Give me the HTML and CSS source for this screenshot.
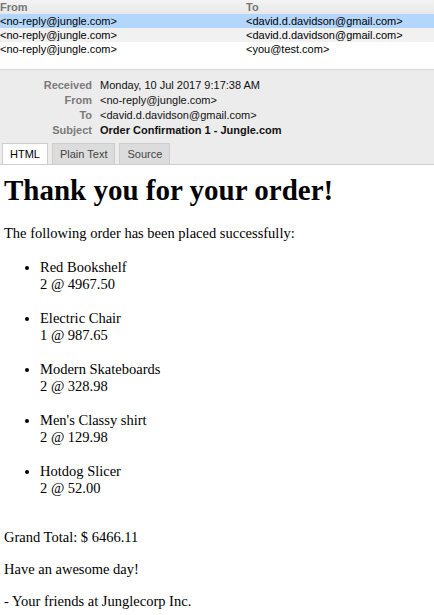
FILE: index.html
```html
<!DOCTYPE html>
<html>
<head>
<meta charset="utf-8">
<link rel="stylesheet" href="styles.css">
</head>
<body>
<div class="list">
  <div class="row head"><span class="c1">From</span><span class="c2">To</span></div>
  <div class="row sel"><span class="c1">&lt;no-reply@jungle.com&gt;</span><span class="c2">&lt;david.d.davidson@gmail.com&gt;</span></div>
  <div class="row alt"><span class="c1">&lt;no-reply@jungle.com&gt;</span><span class="c2">&lt;david.d.davidson@gmail.com&gt;</span></div>
  <div class="row"><span class="c1">&lt;no-reply@jungle.com&gt;</span><span class="c2">&lt;you@test.com&gt;</span></div>
</div>
<div class="meta">
  <div class="fields">
    <span class="lbl">Received</span><span class="val">Monday, 10 Jul 2017 9:17:38 AM</span>
    <span class="lbl">From</span><span class="val">&lt;no-reply@jungle.com&gt;</span>
    <span class="lbl">To</span><span class="val">&lt;david.d.davidson@gmail.com&gt;</span>
    <span class="lbl">Subject</span><span class="val subj">Order Confirmation 1 - Jungle.com</span>
  </div>
  <div class="tabs">
    <span class="tab active">HTML</span>
    <span class="tab">Plain Text</span>
    <span class="tab">Source</span>
  </div>
</div>
<div class="mail">
  <h1>Thank you for your order!</h1>
  <p>The following order has been placed successfully:</p>
  <ul>
    <li>Red Bookshelf<br>2 @ 4967.50</li>
    <li>Electric Chair<br>1 @ 987.65</li>
    <li>Modern Skateboards<br>2 @ 328.98</li>
    <li>Men's Classy shirt<br>2 @ 129.98</li>
    <li>Hotdog Slicer<br>2 @ 52.00</li>
  </ul>
  <p>Grand Total: $ 6466.11</p>
  <p>Have an awesome day!</p>
  <p>- Your friends at Junglecorp Inc.</p>
</div>
</body>
</html>
```
FILE: styles.css
```css
html, body {
  margin: 0;
  padding: 0;
  background: #fff;
}
body {
  font-family: "Liberation Sans", Arial, sans-serif;
  font-size: 11px;
  color: #000;
}
.list {
  height: 69px;
  border-bottom: 1px solid #d6d6d6;
}
.row {
  display: flex;
  height: 14px;
  line-height: 14px;
  white-space: nowrap;
}
.row .c1 { width: 246px; }
.row .c2 { flex: 1; }
.head {
  background: linear-gradient(#f3f3f3, #e8e8e8);
  color: #777;
  font-weight: bold;
  height: 14px;
}
.sel { background: #b3d6fc; }
.alt { background: #f1f1f1; }
.meta {
  background: #ececec;
  padding-top: 8px;
  border-bottom: 1px solid #cfcfcf;
}
.fields {
  display: grid;
  grid-template-columns: 92px 1fr;
  column-gap: 8px;
  row-gap: 1px;
  line-height: 14px;
}
.lbl {
  text-align: right;
  color: #7a7a7a;
  font-weight: bold;
}
.val { color: #111; }
.subj { font-weight: bold; }
.tabs {
  display: flex;
  gap: 4px;
  padding: 6px 0 0 2px;
}
.tab {
  display: block;
  padding: 0 7px;
  line-height: 20px;
  background: #dcdcdc;
  border: 1px solid #cdcdcd;
  border-bottom: none;
  color: #444;
}
.tab.active {
  background: #fff;
  color: #000;
}
.mail {
  padding: 0 4px;
  font-family: "Liberation Serif", "Times New Roman", serif;
  font-size: 14.5px;
  line-height: 17px;
}
.mail h1 {
  font-size: 29px;
  line-height: 34px;
  margin: 7.5px 0 18.5px;
}
.mail p {
  margin: 15px 0;
}
.mail ul {
  margin: 17px 0 14px;
  padding-left: 36px;
}
.mail li {
  padding-bottom: 17px;
}
```
